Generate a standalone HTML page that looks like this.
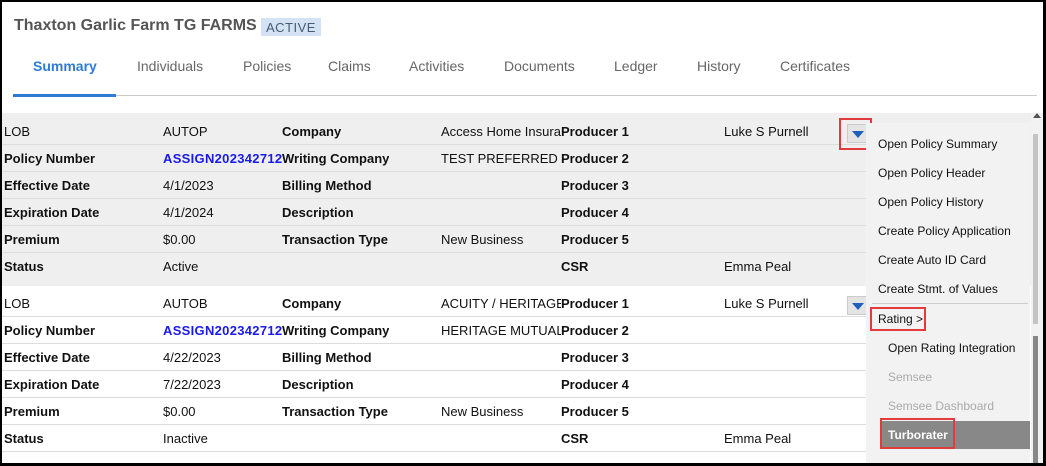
<!DOCTYPE html>
<html><head><style>
*{margin:0;padding:0;box-sizing:border-box}
body{width:1046px;height:466px;background:#000;font-family:"Liberation Sans",Arial,sans-serif;overflow:hidden;position:relative}
#p{position:absolute;left:2px;top:2px;width:1041px;height:461px;background:#fff;overflow:hidden}
.t{position:absolute;left:12px;top:15px;font-size:16px;font-weight:bold;color:#555}
.badge{position:absolute;left:259px;top:16px;width:60px;height:18px;background:#d3e3f5;color:#4a5a70;font-size:13px;text-align:center;line-height:19px;letter-spacing:.5px}
.tab{position:absolute;top:56px;font-size:14px;color:#666}
.ul{position:absolute;left:11px;top:93px;width:1024px;height:1px;background:#ccc}
.ulb{position:absolute;left:11px;top:92px;width:103px;height:3px;background:#2e7bd6}
.row{position:absolute;left:0;width:866px;height:27px;border-bottom:1px solid #ddd;font-size:13px;color:#111}
.row span{position:absolute;top:6px;white-space:nowrap;overflow:hidden}
.b{font-weight:bold}
.c1{left:2px}.c2{left:161px;width:119px}.c3{left:280px}.c4{left:439px;width:120px}.c5{left:559px}.c6{left:722px}
.lnk{color:#1a1aee;font-weight:bold;letter-spacing:.3px}
.dd{position:absolute;width:20px;height:19px;background:#e4e4e4;border:1px solid #ccc}
.dd:after{content:"";position:absolute;left:4px;top:6px;border-left:6px solid transparent;border-right:6px solid transparent;border-top:7px solid #1f5fb8}
.menu{position:absolute;left:864px;top:121px;width:164px;height:340px;background:#f2f2f2}
.mi{position:absolute;left:12px;font-size:12px;color:#111;white-space:nowrap}
.red{position:absolute;border:2px solid #e23b3b}
</style></head><body><div id="p">
<div class="t">Thaxton Garlic Farm TG FARMS</div>
<div class="badge">ACTIVE</div>
<div class="tab" style="left:31px;color:#2e7bd6;font-weight:bold">Summary</div>
<div class="tab" style="left:135px">Individuals</div>
<div class="tab" style="left:241px">Policies</div>
<div class="tab" style="left:326px">Claims</div>
<div class="tab" style="left:407px">Activities</div>
<div class="tab" style="left:502px">Documents</div>
<div class="tab" style="left:612px">Ledger</div>
<div class="tab" style="left:695px">History</div>
<div class="tab" style="left:778px">Certificates</div>
<div class="ul"></div><div class="ulb"></div>
<div style="position:absolute;left:0;top:111px;width:1030px;height:173px;background:#efefef"></div>

<div class="row" style="top:116px"><span class="c1">LOB</span><span class="c2">AUTOP</span><span class="c3 b">Company</span><span class="c4">Access Home Insurance</span><span class="c5 b">Producer 1</span><span class="c6">Luke S Purnell</span></div>
<div class="row" style="top:143px"><span class="c1 b">Policy Number</span><span class="c2 lnk">ASSIGN202342712</span><span class="c3 b">Writing Company</span><span class="c4">TEST PREFERRED</span><span class="c5 b">Producer 2</span></div>
<div class="row" style="top:170px"><span class="c1 b">Effective Date</span><span class="c2">4/1/2023</span><span class="c3 b">Billing Method</span><span class="c5 b">Producer 3</span></div>
<div class="row" style="top:197px"><span class="c1 b">Expiration Date</span><span class="c2">4/1/2024</span><span class="c3 b">Description</span><span class="c5 b">Producer 4</span></div>
<div class="row" style="top:224px"><span class="c1 b">Premium</span><span class="c2">$0.00</span><span class="c3 b">Transaction Type</span><span class="c4">New Business</span><span class="c5 b">Producer 5</span></div>
<div class="row" style="top:251px;border:none"><span class="c1 b">Status</span><span class="c2">Active</span><span class="c5 b">CSR</span><span class="c6">Emma Peal</span></div>

<div class="row" style="top:288px"><span class="c1">LOB</span><span class="c2">AUTOB</span><span class="c3 b">Company</span><span class="c4">ACUITY / HERITAGE</span><span class="c5 b">Producer 1</span><span class="c6">Luke S Purnell</span></div>
<div class="row" style="top:315px"><span class="c1 b">Policy Number</span><span class="c2 lnk">ASSIGN202342712</span><span class="c3 b">Writing Company</span><span class="c4">HERITAGE MUTUAL</span><span class="c5 b">Producer 2</span></div>
<div class="row" style="top:342px"><span class="c1 b">Effective Date</span><span class="c2">4/22/2023</span><span class="c3 b">Billing Method</span><span class="c5 b">Producer 3</span></div>
<div class="row" style="top:369px"><span class="c1 b">Expiration Date</span><span class="c2">7/22/2023</span><span class="c3 b">Description</span><span class="c5 b">Producer 4</span></div>
<div class="row" style="top:396px"><span class="c1 b">Premium</span><span class="c2">$0.00</span><span class="c3 b">Transaction Type</span><span class="c4">New Business</span><span class="c5 b">Producer 5</span></div>
<div class="row" style="top:423px"><span class="c1 b">Status</span><span class="c2">Inactive</span><span class="c5 b">CSR</span><span class="c6">Emma Peal</span></div>

<div class="dd" style="left:845px;top:122px"></div>
<div class="red" style="left:837px;top:116px;width:33px;height:32px"></div>
<div class="dd" style="left:845px;top:294px"></div>

<div class="menu">
<div class="mi" style="top:14px">Open Policy Summary</div>
<div class="mi" style="top:43px">Open Policy Header</div>
<div class="mi" style="top:72px">Open Policy History</div>
<div class="mi" style="top:101px">Create Policy Application</div>
<div class="mi" style="top:130px">Create Auto ID Card</div>
<div class="mi" style="top:159px">Create Stmt. of Values</div>
<div style="position:absolute;left:6px;top:180px;width:156px;height:1px;background:#ccc"></div>
<div class="mi" style="top:189px">Rating &gt;</div>
<div class="mi" style="left:22px;top:218px">Open Rating Integration</div>
<div class="mi" style="left:22px;top:247px;color:#aaa">Semsee</div>
<div class="mi" style="left:22px;top:276px;color:#aaa">Semsee Dashboard</div>
<div style="position:absolute;left:14px;top:298px;width:150px;height:28px;background:#888"></div>
<div class="mi" style="left:22px;top:305px;color:#fff;font-weight:bold">Turborater</div>
</div>
<div class="red" style="left:868px;top:305px;width:56px;height:24px"></div>
<div class="red" style="left:878px;top:416px;width:75px;height:31px"></div>
<div style="position:absolute;left:1029px;top:111px;width:12px;height:350px;background:#f2f2f2"></div>
<div style="position:absolute;left:1031px;top:111px;border-left:4px solid transparent;border-right:4px solid transparent;border-bottom:5px solid #555"></div>
<div style="position:absolute;left:1031px;top:132px;width:5px;height:190px;background:#c4c4c4"></div>
<div style="position:absolute;left:1031px;top:334px;width:5px;height:127px;background:#888"></div>
</div></body></html>
